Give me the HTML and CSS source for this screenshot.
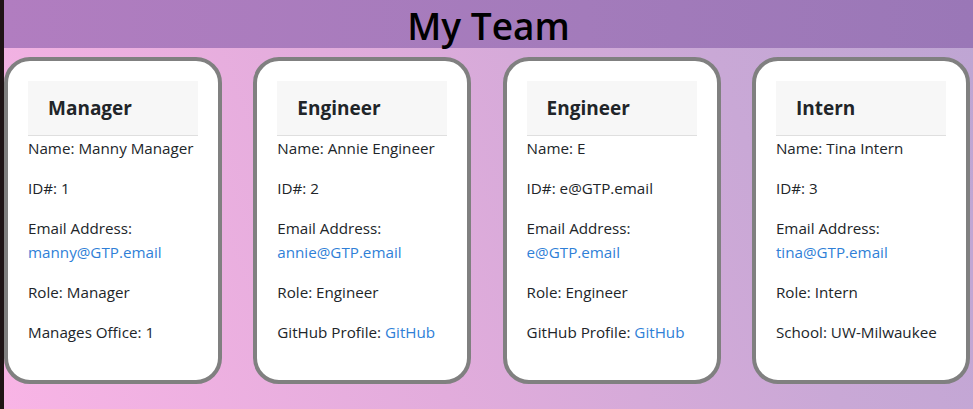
FILE: index.html
```html
<!DOCTYPE html>
<html lang="en">
<head>
    <meta charset="UTF-8">
    <meta name="viewport" content="width=device-width, initial-scale=1.0">
    <title>My Team</title>
    <link rel="stylesheet" href="styles.css">
</head>
<body>
    <div class="page">
        <h1 class="banner">My Team</h1>

        <div class="team">
            <div class="card">
                <div class="card-header"><h5>Manager</h5></div>
                <p>Name: Manny Manager</p>
                <p>ID#: 1</p>
                <p>Email Address: <a href="mailto:manny@GTP.email">manny@GTP.email</a></p>
                <p>Role: Manager</p>
                <p>Manages Office: 1</p>
            </div>

            <div class="card">
                <div class="card-header"><h5>Engineer</h5></div>
                <p>Name: Annie Engineer</p>
                <p>ID#: 2</p>
                <p>Email Address: <a href="mailto:annie@GTP.email">annie@GTP.email</a></p>
                <p>Role: Engineer</p>
                <p>GitHub Profile: <a href="#">GitHub</a></p>
            </div>

            <div class="card">
                <div class="card-header"><h5>Engineer</h5></div>
                <p>Name: E</p>
                <p>ID#: e@GTP.email</p>
                <p>Email Address: <a href="mailto:e@GTP.email">e@GTP.email</a></p>
                <p>Role: Engineer</p>
                <p>GitHub Profile: <a href="#">GitHub</a></p>
            </div>

            <div class="card">
                <div class="card-header"><h5>Intern</h5></div>
                <p>Name: Tina Intern</p>
                <p>ID#: 3</p>
                <p>Email Address: <a href="mailto:tina@GTP.email">tina@GTP.email</a></p>
                <p>Role: Intern</p>
                <p>School: UW-Milwaukee</p>
            </div>
        </div>
    </div>
</body>
</html>
```

FILE: styles.css
```css
html, body {
    height: 100%;
}
body {
    margin: 0;
    font-family: "Open Sans", Arial, sans-serif;
    font-size: 15.2px;
    line-height: 24px;
    color: #212529;
    background: #1f1416;
}
.page {
    margin-left: 4px;
    min-height: 100%;
    background: linear-gradient(70deg, #f8b4e5 0%, #e2acdc 40%, #c9a8d6 75%, #bea5d3 100%);
}
.banner {
    margin: 0;
    padding-top: 3px;
    height: 45px;
    line-height: 45px;
    font-size: 37px;
    font-weight: 600;
    text-align: center;
    color: #000;
    background: linear-gradient(to right, #b17dc0, #a37bbb 60%, #9a77b7);
}
.team {
    display: flex;
    gap: 31.3px;
    padding-top: 9px;
}
.card {
    width: 170px;
    padding: 20px;
    background: #fff;
    border: 4px solid #808080;
    border-radius: 26px;
}
.card-header {
    padding: 15px 20px;
    background: #f7f7f7;
    border-bottom: 1px solid #dfdfdf;
}
.card-header h5 {
    margin: 0;
    font-size: 19px;
    line-height: 24px;
    font-weight: 700;
    color: #212529;
}
.card p {
    margin: 0 0 16px;
}
.card a {
    color: #2f7fd7;
    text-decoration: none;
}
```
